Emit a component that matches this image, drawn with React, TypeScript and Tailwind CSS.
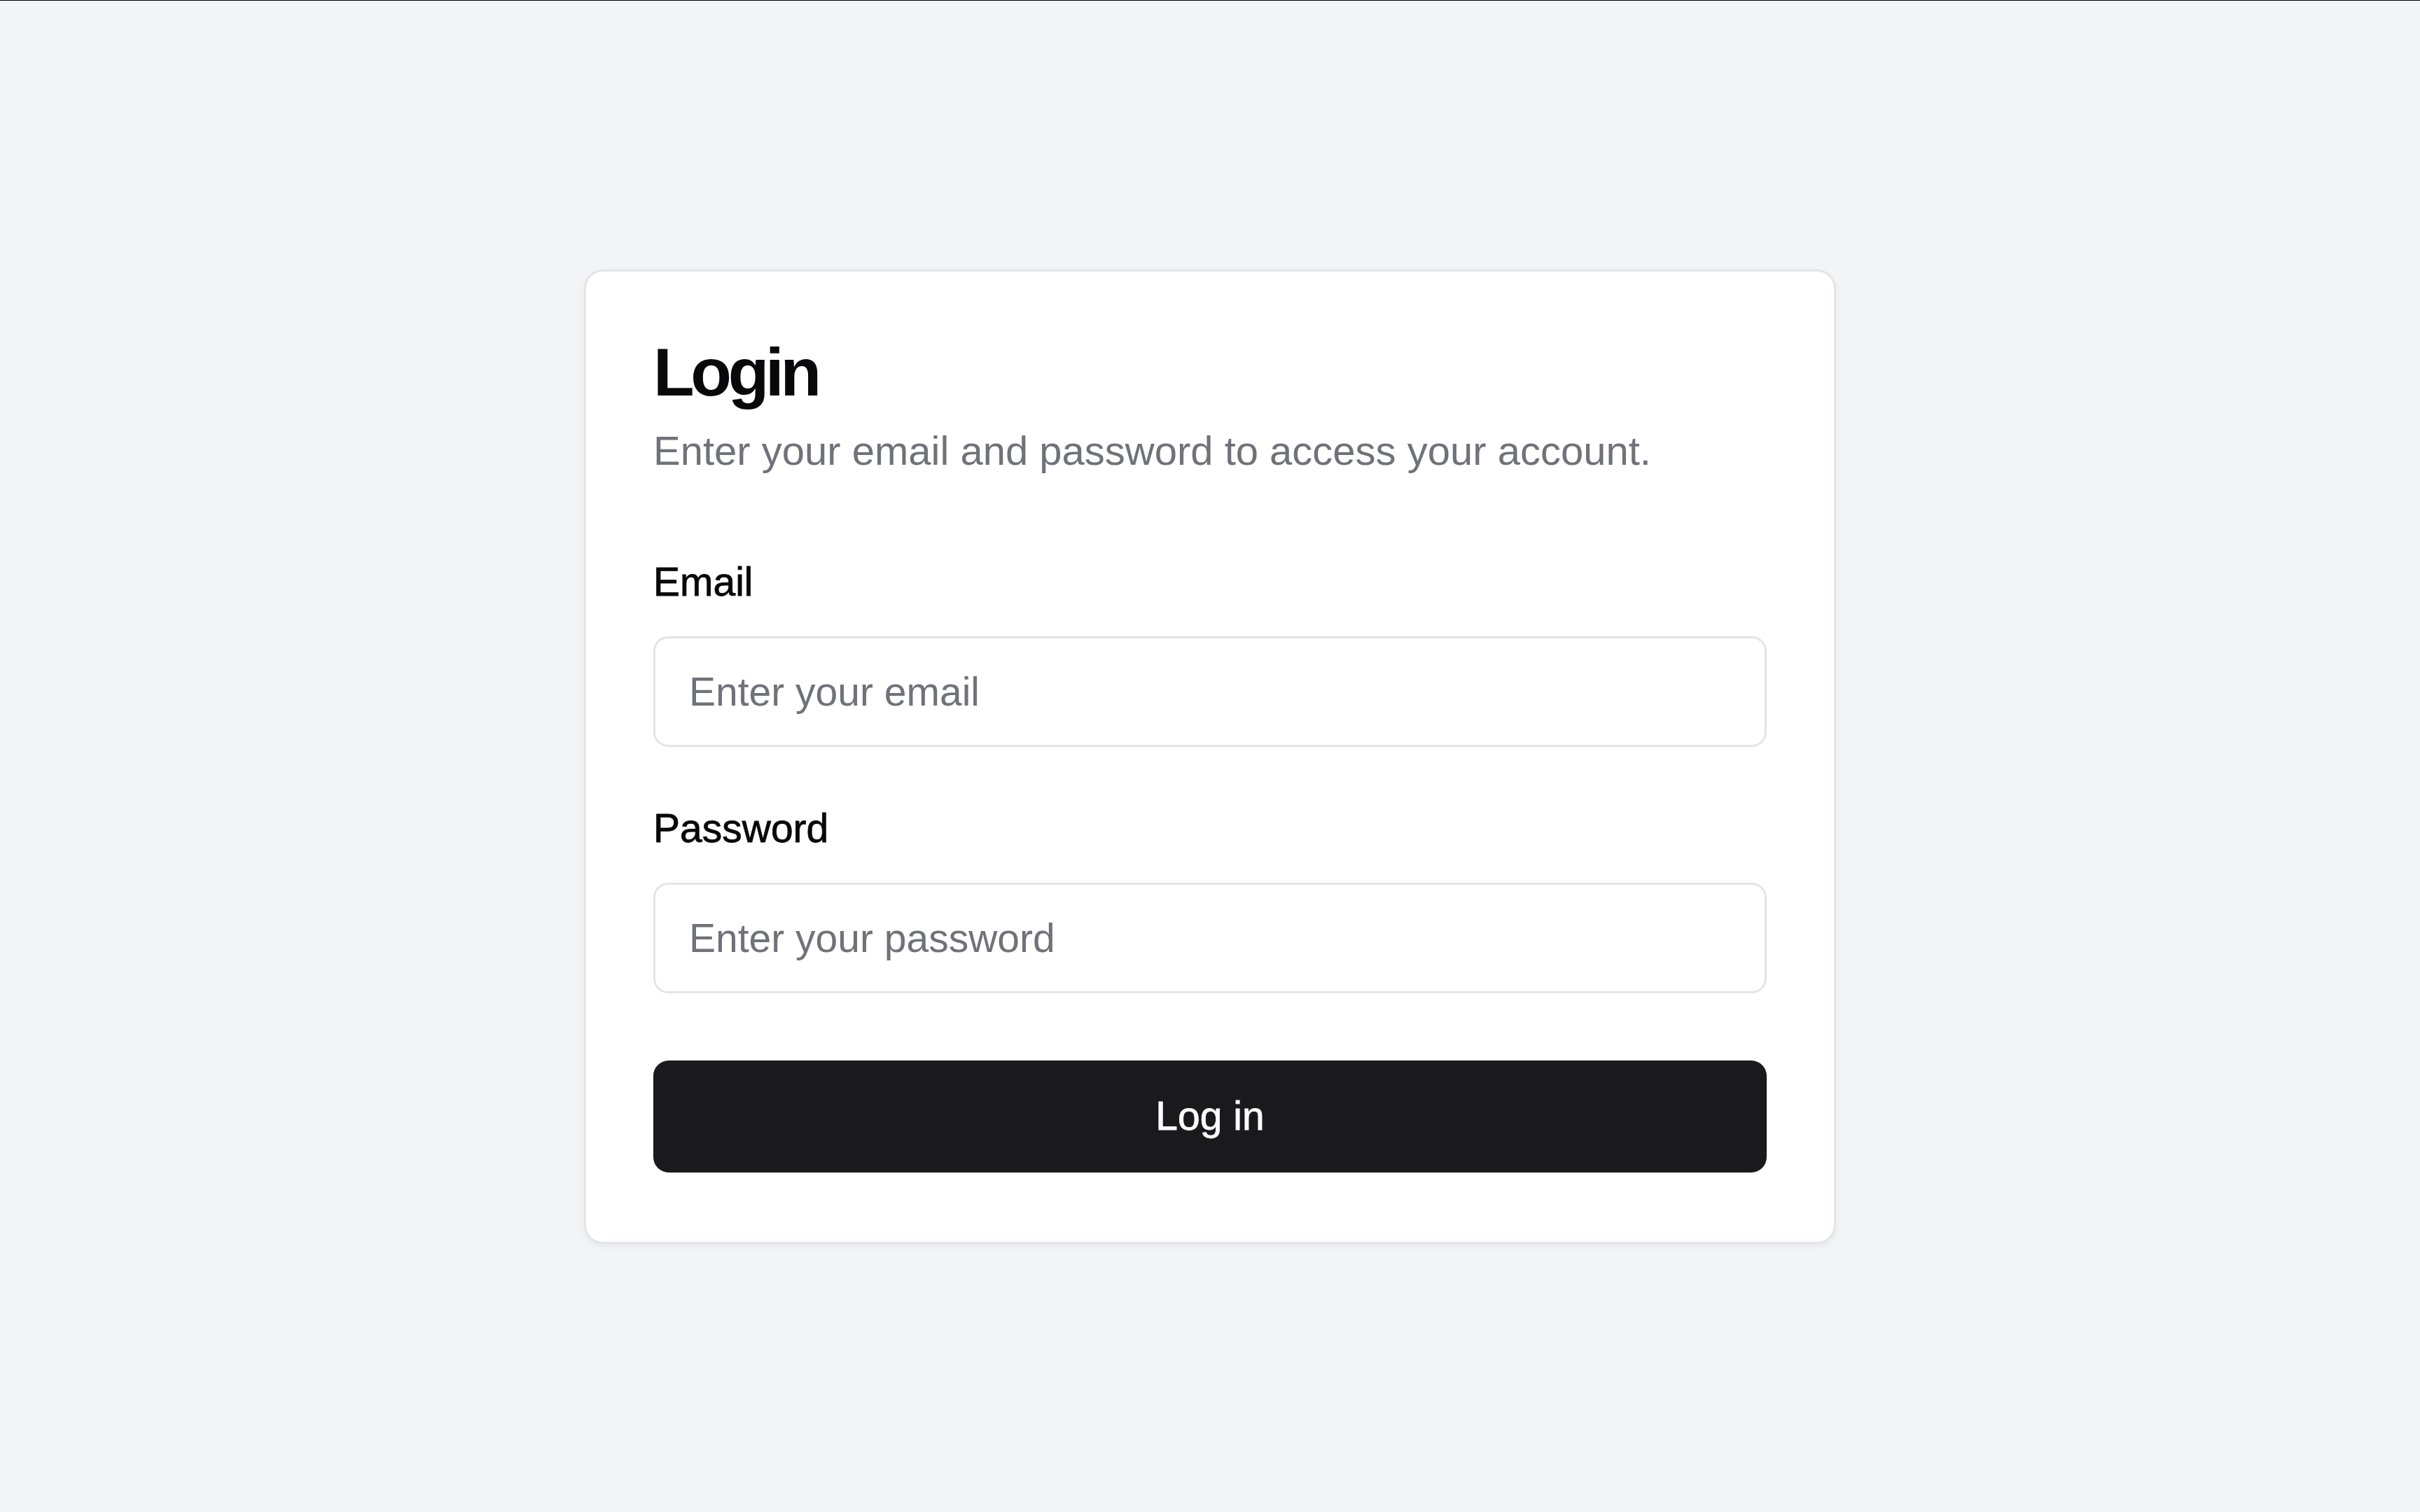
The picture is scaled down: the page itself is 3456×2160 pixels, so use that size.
import React from "react";

const Field: React.FC<{ label: string; type: string; placeholder: string; className?: string }> = ({
  label,
  type,
  placeholder,
  className,
}) => (
  <div className={`flex flex-col ${className ?? ""}`}>
    {/* Liberation has no 500 weight, a thin stroke stands in for font-medium */}
    <label className="text-[57px] leading-none font-medium text-[#09090b] [-webkit-text-stroke:0.8px_#09090b]">
      {label}
    </label>
    <input
      type={type}
      placeholder={placeholder}
      className="mt-[49px] h-[158px] w-full rounded-[21px] border-[3px] border-[#e4e4e7] bg-white px-[48px] text-[57px] text-[#09090b] placeholder:text-[#71717a] outline-none"
    />
  </div>
);

export default function App() {
  return (
    <div
      className="flex min-h-screen items-center justify-center border-t border-black bg-[#f3f4f6]"
      style={{ fontFamily: '"Liberation Sans", Arial, sans-serif' }}
    >
      <div className="w-[1788px] rounded-[27px] border-[3px] border-[#e4e4e7] bg-white px-[96px] pt-[96px] pb-[99px] shadow-[0_4px_10px_rgba(0,0,0,0.05)]">
        <h1 className="text-[96px] leading-[96px] font-bold tracking-[-0.055em] text-[#09090b]">Login</h1>
        <p className="mt-[20px] text-[58px] leading-[87px] text-[#71717a]">
          Enter your email and password to access your account.
        </p>

        <form className="mt-[116px] flex flex-col" onSubmit={(e) => e.preventDefault()}>
          <Field label="Email" type="email" placeholder="Enter your email" />
          <Field label="Password" type="password" placeholder="Enter your password" className="mt-[88px]" />
          <button
            type="submit"
            className="mt-[96px] h-[160px] w-full rounded-[22px] bg-[#1a1a1c] text-[57px] font-medium text-[#fafafa] [-webkit-text-stroke:0.8px_#fafafa]"
          >
            Log in
          </button>
        </form>
      </div>
    </div>
  );
}
